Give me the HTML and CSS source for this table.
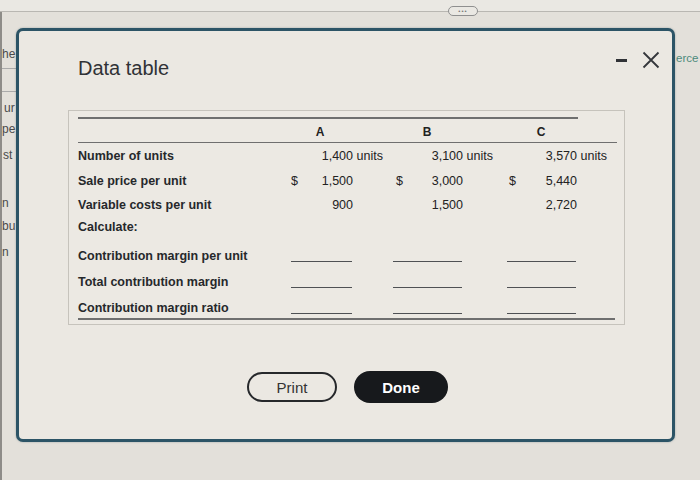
FILE: index.html
```html
<!DOCTYPE html>
<html>
<head>
<meta charset="utf-8">
<link rel="stylesheet" href="styles.css">
</head>
<body>
<div class="page">
  <div class="topbar"><span class="pill">•••</span></div>
  <div class="under">
    <div class="strip-left">
      <div class="frag f-he">he</div>
      <div class="frag f-blank"></div>
      <div class="frag f-ur">ur</div>
      <div class="frag f-pe">pe</div>
      <div class="frag f-st">st</div>
      <div class="frag f-n1">n</div>
      <div class="frag f-bu">bu</div>
      <div class="frag f-n2">n</div>
    </div>
    <div class="strip-right"><span class="frag-green">erce</span></div>
  </div>
</div>

<div class="modal">
  <div class="modal-head">
    <h1 class="title">Data table</h1>
    <div class="controls">
      <span class="minimize"></span>
      <svg class="close" width="18" height="18" viewBox="0 0 18 18"><path d="M1.5 1.5 L16.5 16.5 M16.5 1.5 L1.5 16.5" stroke="#34373b" stroke-width="1.8" fill="none"/></svg>
    </div>
  </div>

  <div class="table-box">
    <div class="top-line"></div>
    <div class="row head">
      <span class="h-a">A</span>
      <span class="h-b">B</span>
      <span class="h-c">C</span>
    </div>
    <div class="row r1">
      <span class="label">Number of units</span>
      <span class="cur c2"></span><span class="num c3">1,400</span><span class="unit c4">&nbsp;units</span>
      <span class="cur c5"></span><span class="num c6">3,100</span><span class="unit c7">&nbsp;units</span>
      <span class="cur c8"></span><span class="num c9">3,570</span><span class="unit c10">&nbsp;units</span>
    </div>
    <div class="row r2">
      <span class="label">Sale price per unit</span>
      <span class="cur c2">$</span><span class="num c3">1,500</span><span class="unit c4"></span>
      <span class="cur c5">$</span><span class="num c6">3,000</span><span class="unit c7"></span>
      <span class="cur c8">$</span><span class="num c9">5,440</span><span class="unit c10"></span>
    </div>
    <div class="row r3">
      <span class="label">Variable costs per unit</span>
      <span class="cur c2"></span><span class="num c3">900</span><span class="unit c4"></span>
      <span class="cur c5"></span><span class="num c6">1,500</span><span class="unit c7"></span>
      <span class="cur c8"></span><span class="num c9">2,720</span><span class="unit c10"></span>
    </div>
    <div class="row calc">
      <span class="label">Calculate:</span>
    </div>
    <div class="row blank-row b1">
      <span class="label">Contribution margin per unit</span>
      <span class="blank ba"></span><span class="blank bb"></span><span class="blank bc"></span>
    </div>
    <div class="row blank-row b2">
      <span class="label">Total contribution margin</span>
      <span class="blank ba"></span><span class="blank bb"></span><span class="blank bc"></span>
    </div>
    <div class="row blank-row b3">
      <span class="label">Contribution margin ratio</span>
      <span class="blank ba"></span><span class="blank bb"></span><span class="blank bc"></span>
    </div>
  </div>

  <div class="actions">
    <button class="btn print">Print</button>
    <button class="btn done">Done</button>
  </div>
</div>
</body>
</html>
```

FILE: styles.css
```css
* { box-sizing: border-box; }
html, body {
  margin: 0;
  padding: 0;
}
body {
  width: 700px;
  height: 480px;
  overflow: hidden;
  position: relative;
  background: #e3e0da;
  font-family: "Liberation Sans", Arial, sans-serif;
}

/* background page peeking around the modal */
.page {
  display: flex;
  flex-direction: column;
  height: 480px;
}
.topbar {
  height: 12px;
  background: #eae8e3;
  border-bottom: 1px solid #b9b7b2;
  display: flex;
  justify-content: flex-start;
  padding-left: 448px;
  padding-top: 6px;
}
.pill {
  display: flex;
  align-items: center;
  justify-content: center;
  width: 30px;
  height: 10px;
  border: 1px solid #8f8f8f;
  border-radius: 5px;
  background: #eae8e3;
  font-size: 6px;
  letter-spacing: 1px;
  color: #777;
  line-height: 1;
}
.under {
  flex: 1;
  display: flex;
  justify-content: space-between;
  border-left: 2px solid #8e8c88;
}
.strip-left {
  width: 16px;
  display: flex;
  flex-direction: column;
  font-size: 12px;
  color: #4a4a4a;
  white-space: nowrap;
}
.frag { height: 16px; line-height: 16px; width: 16px; text-align: left; }
.f-he { margin-top: 34px; height: 23px; border-bottom: 1px solid #aaa; }
.f-blank { height: 23px; border-bottom: 1px solid #aaa; }
.f-ur { margin-top: 8px; padding-left: 2px; }
.f-pe { margin-top: 5px; }
.f-st { margin-top: 10px; padding-left: 1px; }
.f-n1 { margin-top: 32px; }
.f-bu { margin-top: 7px; }
.f-n2 { margin-top: 10px; }
.strip-right {
  width: 24px;
  padding-top: 40px;
  font-size: 11.5px;
  color: #4d8a7c;
  white-space: nowrap;
}

/* modal */
.modal {
  position: absolute;
  left: 16px;
  top: 28px;
  width: 659px;
  height: 414px;
  background: #ebe8e2;
  border: 3px solid #2c5466;
  border-radius: 7px;
  box-shadow: 0 0 2px rgba(40, 70, 80, 0.4);
  display: flex;
  flex-direction: column;
}
.modal-head {
  display: flex;
  justify-content: space-between;
  align-items: flex-start;
  padding: 20px 12px 0 59px;
}
.title {
  margin: 5px 0 0 0;
  font-size: 20px;
  line-height: 24px;
  font-weight: normal;
  color: #303236;
}
.controls {
  display: flex;
  align-items: flex-start;
  gap: 15px;
}
.minimize {
  display: block;
  width: 11px;
  height: 3px;
  margin-top: 8px;
  background: #303236;
}
.close { display: block; }

.table-box {
  margin: 30px 0 0 49px;
  width: 557px;
  height: 215px;
  border: 1px solid #c6c3bc;
  background: #ece9e3;
  padding: 6px 0 0 9px;
}
.top-line {
  width: 500px;
  height: 2px;
  background: #6f6f6f;
}
.row {
  display: grid;
  grid-template-columns: 209px 15px 51px 38px 17px 55px 42px 15px 57px 33px;
  align-items: center;
  font-size: 12.5px;
  color: #222;
}
.label { grid-column: 1; font-weight: bold; color: #26282b; }
.head {
  width: 539px;
  height: 24px;
  border-bottom: 1px solid #6f6f6f;
  align-items: end;
  padding-bottom: 3px;
  font-size: 12px;
  font-weight: bold;
}
.h-a { grid-column: 2 / 4; text-align: center; }
.h-b { grid-column: 5 / 7; text-align: center; }
.h-c { grid-column: 8 / 10; text-align: center; }

.r1 { height: 26px; }
.r2 { height: 24px; }
.r3 { height: 24px; }
.calc { height: 20px; margin-bottom: 6px; }
.cur { text-align: center; }
.num { text-align: right; }
.unit { white-space: nowrap; }
.c2 { grid-column: 2; } .c3 { grid-column: 3; } .c4 { grid-column: 4; }
.c5 { grid-column: 5; } .c6 { grid-column: 6; } .c7 { grid-column: 7; }
.c8 { grid-column: 8; } .c9 { grid-column: 9; } .c10 { grid-column: 10; }

.blank-row { height: 26px; }
.b3 {
  height: 25px;
  padding-top: 3px;
  width: 537px;
  border-bottom: 2px solid #6f6f6f;
}
.blank {
  display: block;
  height: 11px;
  border-bottom: 1px solid #4f5154;
}
.ba { grid-column: 2 / 4; margin: 0 1px 0 4px; }
.bb { grid-column: 5 / 7; margin: 0 1px 0 2px; }
.bc { grid-column: 8 / 10; margin: 0 1px 0 2px; }

.actions {
  display: flex;
  justify-content: center;
  align-items: center;
  gap: 17px;
  margin-top: 46px;
  padding-left: 4px;
}
.btn {
  font-family: "Liberation Sans", Arial, sans-serif;
  font-size: 15px;
  border-radius: 16px;
  cursor: pointer;
}
.print {
  width: 90px;
  height: 30px;
  background: transparent;
  border: 2px solid #26282b;
  color: #333;
}
.done {
  width: 94px;
  height: 32px;
  background: #17191c;
  border: none;
  color: #fff;
  font-weight: bold;
}
```
